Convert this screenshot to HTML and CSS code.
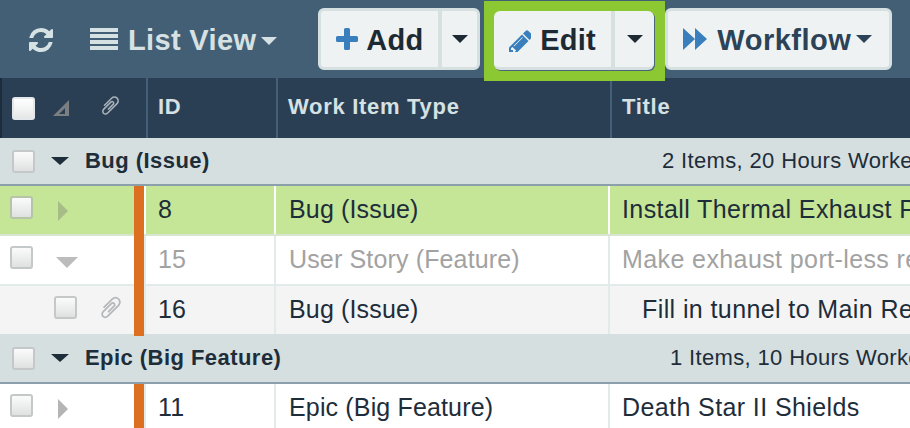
FILE: index.html
```html
<!DOCTYPE html>
<html lang="en">
<head>
<meta charset="utf-8">
<title>List View</title>
<link rel="stylesheet" href="styles.css">
</head>
<body>
<div class="page">
  <div class="toolbar">
    <svg class="refresh" viewBox="0 0 1536 1536"><path d="M1511 928q0 5-1 7-64 268-268 434.500t-478 166.500q-146 0-282.500-55t-243.500-157l-129 129q-19 19-45 19t-45-19-19-45v-448q0-26 19-45t45-19h448q26 0 45 19t19 45-19 45l-137 137q71 66 161 102t187 36q134 0 250-65t186-179q11-17 53-117 8-23 30-23h192q13 0 22.500 9.500t9.500 22.500zm25-800v448q0 26-19 45t-45 19h-448q-26 0-45-19t-19-45 19-45l138-138q-148-137-349-137-134 0-250 65t-186 179q-11 17-53 117-8 23-30 23h-199q-13 0-22.500-9.500t-9.500-22.500v-7q65-268 270-434.500t480-166.500q146 0 284 55.500t245 156.500l130-129q19-19 45-19t45 19 19 45z"/></svg>
    <div class="bars"><span></span><span></span><span></span><span></span></div>
    <span class="view-label">List View</span>
    <span class="caret caret-light"></span>
    <div class="btn-group add">
      <div class="btn-main">
        <svg class="plus" viewBox="0 0 22 22"><path d="M8 1.500a1.500 1.500 0 0 1 1.500-1.500h3a1.500 1.500 0 0 1 1.500 1.500V8h6.500a1.500 1.500 0 0 1 1.500 1.500v3a1.500 1.500 0 0 1-1.500 1.500H14v6.500a1.500 1.500 0 0 1-1.500 1.500h-3A1.500 1.500 0 0 1 8 20.500V14H1.500A1.500 1.500 0 0 1 0 12.500v-3A1.500 1.500 0 0 1 1.500 8H8z"/></svg>
        <span class="btn-text">Add</span>
      </div>
      <div class="btn-drop"><span class="caret caret-dark"></span></div>
    </div>
    <div class="highlight">
      <div class="btn-group edit">
        <div class="btn-main">
          <svg class="pencil" viewBox="0 0 1536 1536"><path d="M491 1536l91-91-235-235-91 91v107h128v128h107zm523-928q0-22-22-22-10 0-17 7l-542 542q-7 7-7 17 0 22 22 22 10 0 17-7l542-542q7-7 7-17zm-54-192l416 416-832 832h-416v-416zm683 96q0 53-37 90l-166 166-416-416 166-165q36-38 90-38 53 0 91 38l235 234q37 39 37 91z"/></svg>
          <span class="btn-text">Edit</span>
        </div>
        <div class="btn-drop"><span class="caret caret-dark"></span></div>
      </div>
    </div>
    <div class="btn-group workflow">
      <div class="btn-main">
        <svg class="forward" viewBox="0 0 24 22"><path d="M0 0l12 11L0 22zM12 0l12 11-12 11z"/></svg>
        <span class="btn-text btn-text-blue">Workflow</span>
        <span class="caret caret-blue"></span>
      </div>
    </div>
  </div>

  <div class="thead">
    <div class="th th-tools">
      <span class="check check-white"></span>
      <svg class="ruler" viewBox="0 0 18 18"><path fill-rule="evenodd" d="M17 1v16H1zM13 9l-6 6h6z"/></svg>
      <svg class="clip clip-head" viewBox="0 0 1408 1792"><path d="M1404 1385q0 117-79 196t-196 79q-135 0-235-100l-777-776q-113-115-113-271 0-159 110-270t269-111q158 0 273 113l605 606q10 10 10 22 0 16-30.500 46.500t-46.500 30.500q-13 0-23-10l-606-607q-79-77-181-77-106 0-179 75t-73 181q0 105 76 181l776 777q63 63 145 63 64 0 106-42t42-106q0-82-63-145l-581-581q-26-24-60-24-29 0-48 19t-19 48q0 32 25 59l410 410q10 10 10 22 0 16-31 47t-47 31q-12 0-22-10l-410-410q-63-61-63-149 0-82 57-139t139-57q88 0 149 63l581 581q100 98 100 235z"/></svg>
    </div>
    <div class="th th-id">ID</div>
    <div class="th th-type">Work Item Type</div>
    <div class="th th-title">Title</div>
  </div>

  <div class="group group-first">
    <span class="check"></span>
    <span class="caret caret-group"></span>
    <span class="group-name">Bug (Issue)</span>
    <span class="group-summary summary-bug">2 Items, 20 Hours Worked</span>
  </div>

  <div class="row row-selected">
    <div class="cell-tools">
      <span class="check"></span>
      <span class="arrow-right"></span>
    </div>
    <div class="flag"></div>
    <div class="cell cell-id">8</div>
    <div class="cell cell-type">Bug (Issue)</div>
    <div class="cell cell-title">Install Thermal Exhaust Port</div>
  </div>

  <div class="row row-muted">
    <div class="cell-tools">
      <span class="check"></span>
      <span class="arrow-down"></span>
    </div>
    <div class="flag"></div>
    <div class="cell cell-id">15</div>
    <div class="cell cell-type">User Story (Feature)</div>
    <div class="cell cell-title">Make exhaust port-less reachable</div>
  </div>

  <div class="row row-child">
    <div class="cell-tools cell-tools-child">
      <span class="check"></span>
      <svg class="clip clip-row" viewBox="0 0 1408 1792"><path d="M1404 1385q0 117-79 196t-196 79q-135 0-235-100l-777-776q-113-115-113-271 0-159 110-270t269-111q158 0 273 113l605 606q10 10 10 22 0 16-30.500 46.500t-46.500 30.500q-13 0-23-10l-606-607q-79-77-181-77-106 0-179 75t-73 181q0 105 76 181l776 777q63 63 145 63 64 0 106-42t42-106q0-82-63-145l-581-581q-26-24-60-24-29 0-48 19t-19 48q0 32 25 59l410 410q10 10 10 22 0 16-31 47t-47 31q-12 0-22-10l-410-410q-63-61-63-149 0-82 57-139t139-57q88 0 149 63l581 581q100 98 100 235z"/></svg>
    </div>
    <div class="flag"></div>
    <div class="cell cell-id">16</div>
    <div class="cell cell-type">Bug (Issue)</div>
    <div class="cell cell-title cell-title-child">Fill in tunnel to Main Reactor</div>
  </div>

  <div class="group">
    <span class="check"></span>
    <span class="caret caret-group"></span>
    <span class="group-name">Epic (Big Feature)</span>
    <span class="group-summary summary-epic">1 Items, 10 Hours Worked</span>
  </div>

  <div class="row row-plain">
    <div class="cell-tools">
      <span class="check"></span>
      <span class="arrow-right"></span>
    </div>
    <div class="flag"></div>
    <div class="cell cell-id">11</div>
    <div class="cell cell-type">Epic (Big Feature)</div>
    <div class="cell cell-title">Death Star II Shields</div>
  </div>
</div>
</body>
</html>
```
FILE: styles.css
```css
* { box-sizing: border-box; }
html, body { margin: 0; padding: 0; }
body { font-family: "Liberation Sans", Arial, sans-serif; color: #1e2d3a; background: #fff; }
.page { width: 910px; height: 428px; overflow: hidden; position: relative; }

/* toolbar */
.toolbar { height: 78px; background: #425f75; display: flex; align-items: flex-start; padding: 8px 0 0 29px; position: relative; z-index: 2; }
.refresh { width: 24px; height: 24px; fill: #d6e1e3; margin-top: 20px; }
.bars { width: 28px; height: 22px; margin: 20px 0 0 37px; display: flex; flex-direction: column; justify-content: space-between; }
.bars span { display: block; height: 4px; background: #d6e1e3; }
.view-label { font-size: 29px; font-weight: 700; line-height: 32px; margin: 16px 0 0 10px; color: #d6e1e3; letter-spacing: .35px; white-space: nowrap; }
.caret { display: block; width: 0; height: 0; border-style: solid; border-color: transparent; border-width: 8px 8px 0; }
.caret-light { border-top-color: #d6e1e3; margin: 29px 0 0 5px; }
.caret-dark { border-top-color: #1e2a33; }
.caret-blue { border-top-color: #2c4257; margin-left: 5px; }

.btn-group { height: 62px; display: flex; background: #eef2f3; border: 3px solid #d6e0e0; border-radius: 6px; }
.btn-main { display: flex; align-items: center; }
.btn-text { font-size: 29px; font-weight: 700; color: #1e2a33; letter-spacing: .2px; padding-top: 2px; }
.btn-text-blue { color: #2c4257; letter-spacing: .5px; }
.btn-drop { display: flex; align-items: center; justify-content: center; border-left: 4px solid #d6e0e0; }

.add { width: 162px; margin-left: 41px; }
.add .btn-main { width: 117px; padding-left: 15px; }
.add .btn-drop { flex: 1; }
.plus { width: 22px; height: 22px; fill: #3a7fbd; margin-right: 8px; }

.highlight { width: 181px; height: 80px; margin: -7px 0 0 4px; padding: 10px; background: #8cc832; flex: none; position: relative; z-index: 3; }
.edit { width: 160px; height: 59px; border-width: 0 0 3px; box-shadow: 1px 1px 0 #4a6478; }
.edit .btn-main { width: 117px; padding-left: 15px; }
.edit .btn-drop { flex: 1; }
.pencil { width: 24px; height: 24px; fill: #3a7fbd; margin: 2px 9px 0 -2px; }

.workflow { width: 227px; }
.workflow .btn-main { padding-left: 15px; }
.forward { width: 24px; height: 24px; fill: #3a7fbd; margin-right: 10px; }

/* table head */
.thead { height: 60px; background: #2a3f54; display: flex; border-left: 2px solid #1d2c3a; }
.th { display: flex; align-items: center; font-size: 22px; font-weight: 700; color: #d6e1e3; letter-spacing: .7px; padding: 0 0 3px 10px; border-left: 2px solid #446078; white-space: nowrap; }
.th-tools { width: 144px; border-left: 0; padding: 0 0 0 10px; }
.th-id { width: 130px; }
.th-type { width: 334px; }
.th-title { flex: 1; }
.ruler { width: 18px; height: 18px; fill: #7b7f82; margin: 0 0 0 17px; }
.clip { fill: #b4b8ba; transform: scaleX(-1); }
.clip-head { width: 17px; height: 23px; margin: -6px 0 0 32px; fill: #a9b2b8; }

/* checkboxes */
.check { display: block; width: 23px; height: 23px; flex: none; border: 2px solid #c4c8c8; border-radius: 3px; background: linear-gradient(#fbfbfb, #dfe1e1); filter: blur(.4px); }
.check-white { background: linear-gradient(#fff, #e6e8e8); border-color: #e4e8ea; }

/* groups */
.group { height: 48px; display: flex; align-items: center; background: #d5dfe0; border-bottom: 2px solid #8ba0aa; padding: 0 0 2px 12px; font-size: 22px; white-space: nowrap; }
.group-first { padding-bottom: 0; }
.group-name { font-weight: 700; margin-left: 16px; letter-spacing: .45px; }
.group-summary { position: absolute; letter-spacing: .35px; }
.summary-bug { left: 662px; }
.summary-epic { left: 670px; }
.caret-group { border-top-color: #1e2d3a; border-width: 8px 9px 0; margin-left: 16px; }

/* rows */
.row { height: 50px; display: flex; font-size: 25px; letter-spacing: .15px; border-bottom: 2px solid #e2eaea; white-space: nowrap; }
.cell-tools { width: 134px; display: flex; padding: 10px 0 0 10px; }
.cell-tools-child { padding-left: 54px; }
.flag { width: 10px; background: #dd7020; margin-bottom: -2px; }
.cell { display: flex; align-items: center; padding: 0 0 2px 13px; border-left: 2px solid #e2eaea; }
.cell-id { width: 130px; padding-left: 12px; }
.cell-type { width: 334px; }
.cell-title { flex: 1; min-width: 0; overflow: hidden; padding-left: 12px; letter-spacing: .4px; }
.cell-title-child { padding-left: 32px; }
.arrow-right { display: block; width: 0; height: 0; margin: 5px 0 0 25px; border-style: solid; border-color: transparent transparent transparent #b4b4b4; border-width: 10px 0 10px 10px; }
.arrow-down { display: block; width: 0; height: 0; margin: 11px 0 0 23px; border-style: solid; border-color: #bcbcbc transparent transparent; border-width: 11px 11px 0; }
.clip-row { width: 20px; height: 25px; margin: -1px 0 0 24px; }

.row-selected { background: #c5e597; border-bottom-color: #d6e6cf; }
.row-selected .cell { border-left-color: #fff; }
.row-selected .arrow-right { border-left-color: #a6bd88; }
.row-selected .check { border-color: #b6c4a8; }
.row-muted { background: #fff; color: #a2a2a2; }
.row-child { background: #f4f4f4; border-bottom-color: #d5dfe0; }
.row-plain { background: #fff; }
```
